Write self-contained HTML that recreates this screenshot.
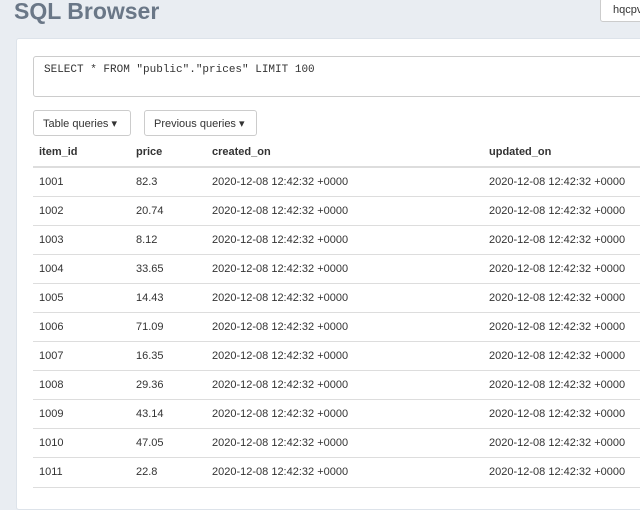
<!DOCTYPE html><html><head><style>
body{margin:0;width:640px;height:492px;overflow:hidden;background:#e9edf2;font-family:"Liberation Sans",sans-serif;position:relative}
h1{position:absolute;left:14px;top:-1px;margin:0;font-size:23px;line-height:24px;color:#6a7787;font-weight:bold}
.inp{position:absolute;left:600px;top:-2px;width:60px;height:22px;background:#fff;border:1px solid #ccc;border-radius:3px;font-size:11px;line-height:22px;padding-left:12px;color:#333}
.card{position:absolute;left:16px;top:38px;width:640px;height:470px;background:#fff;border:1px solid #dde3ea;border-radius:3px}
.ta{position:absolute;left:33px;top:56px;width:620px;height:41px;border:1px solid #ccc;border-radius:3px;font-family:"Liberation Mono",monospace;font-size:11px;color:#333;padding:7px 0 0 10px;box-sizing:border-box}
.btn{position:absolute;top:110px;height:26px;border:1px solid #ccc;border-radius:3px;font-size:11px;line-height:26px;padding:0 9px;box-sizing:border-box;color:#333;background:#fff}
table{position:absolute;left:33px;top:137px;width:620px;border-collapse:collapse;font-size:11px;color:#333}
td,th{text-align:left;padding:0 0 0 6px}
tr{height:29.1px}
tr.h{height:30px}
th{border-bottom:2px solid #ddd}
td{border-bottom:1px solid #ddd}
</style></head><body>
<h1>SQL Browser</h1><div class="inp">hqcpv</div>
<div class="card"></div>
<div class="ta">SELECT * FROM "public"."prices" LIMIT 100</div>
<div class="btn" style="left:33px;width:98px">Table queries ▾</div>
<div class="btn" style="left:144px;width:113px">Previous queries ▾</div>
<table><colgroup><col style="width:97px"><col style="width:76px"><col style="width:277px"><col></colgroup>
<tr class="h"><th>item_id</th><th>price</th><th>created_on</th><th>updated_on</th></tr>
<tr><td>1001</td><td>82.3</td><td>2020-12-08 12:42:32 +0000</td><td>2020-12-08 12:42:32 +0000</td></tr>
<tr><td>1002</td><td>20.74</td><td>2020-12-08 12:42:32 +0000</td><td>2020-12-08 12:42:32 +0000</td></tr>
<tr><td>1003</td><td>8.12</td><td>2020-12-08 12:42:32 +0000</td><td>2020-12-08 12:42:32 +0000</td></tr>
<tr><td>1004</td><td>33.65</td><td>2020-12-08 12:42:32 +0000</td><td>2020-12-08 12:42:32 +0000</td></tr>
<tr><td>1005</td><td>14.43</td><td>2020-12-08 12:42:32 +0000</td><td>2020-12-08 12:42:32 +0000</td></tr>
<tr><td>1006</td><td>71.09</td><td>2020-12-08 12:42:32 +0000</td><td>2020-12-08 12:42:32 +0000</td></tr>
<tr><td>1007</td><td>16.35</td><td>2020-12-08 12:42:32 +0000</td><td>2020-12-08 12:42:32 +0000</td></tr>
<tr><td>1008</td><td>29.36</td><td>2020-12-08 12:42:32 +0000</td><td>2020-12-08 12:42:32 +0000</td></tr>
<tr><td>1009</td><td>43.14</td><td>2020-12-08 12:42:32 +0000</td><td>2020-12-08 12:42:32 +0000</td></tr>
<tr><td>1010</td><td>47.05</td><td>2020-12-08 12:42:32 +0000</td><td>2020-12-08 12:42:32 +0000</td></tr>
<tr><td>1011</td><td>22.8</td><td>2020-12-08 12:42:32 +0000</td><td>2020-12-08 12:42:32 +0000</td></tr>
</table>
</body></html>
